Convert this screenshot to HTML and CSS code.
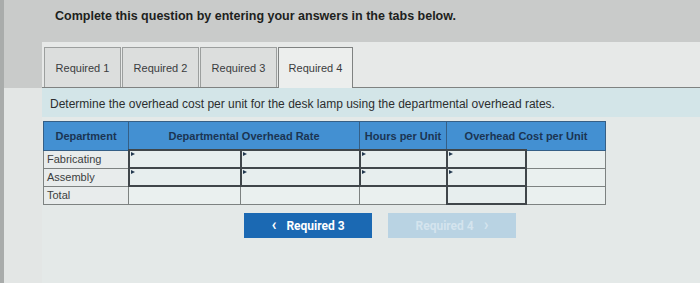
FILE: index.html
```html
<!DOCTYPE html>
<html>
<head>
<meta charset="utf-8">
<link rel="stylesheet" href="styles.css">
</head>
<body>
<div class="page">
  <div class="top">
    <p class="prompt">Complete this question by entering your answers in the tabs below.</p>
    <div class="tabs">
      <div class="tab">Required 1</div>
      <div class="tab">Required 2</div>
      <div class="tab">Required 3</div>
      <div class="tab active">Required 4</div>
    </div>
  </div>
  <div class="content">
    <p class="instr">Determine the overhead cost per unit for the desk lamp using the departmental overhead rates.</p>
    <table class="grid">
      <colgroup>
        <col class="c-dept"><col class="c-r1"><col class="c-r2"><col class="c-hrs"><col class="c-o1"><col class="c-o2">
      </colgroup>
      <thead>
        <tr>
          <th>Department</th>
          <th colspan="2">Departmental Overhead Rate</th>
          <th>Hours per Unit</th>
          <th colspan="2">Overhead Cost per Unit</th>
        </tr>
      </thead>
      <tbody>
        <tr>
          <td class="label">Fabricating</td>
          <td class="in"></td><td class="in"></td><td class="in"></td><td class="in"></td><td></td>
        </tr>
        <tr>
          <td class="label">Assembly</td>
          <td class="in"></td><td class="in"></td><td class="in"></td><td class="in"></td><td></td>
        </tr>
        <tr>
          <td class="label">Total</td>
          <td></td><td></td><td></td><td class="in plain"></td><td></td>
        </tr>
      </tbody>
    </table>
    <div class="nav">
      <button class="btn prev"><span class="chev">&lsaquo;</span>Required 3</button>
      <button class="btn next" disabled>Required 4<span class="chev right">&rsaquo;</span></button>
    </div>
  </div>
</div>
</body>
</html>
```
FILE: styles.css
```css
html, body {
  margin: 0;
  padding: 0;
}
body {
  width: 700px;
  height: 283px;
  overflow: hidden;
  background: #e3e6e5;
  font-family: "Liberation Sans", Arial, sans-serif;
  color: #2a2c2d;
}
.page {
  border-left: 4px solid #a9acab;
  min-height: 283px;
  box-sizing: border-box;
}
.top {
  background: #c9cbca;
}
.prompt {
  margin: 0;
  height: 42px;
  box-sizing: border-box;
  padding: 10px 0 0 51px;
  font-size: 12.5px;
  font-weight: bold;
  color: #1d1f20;
  line-height: 13px;
}
.tabs {
  margin-left: 38px;
  height: 46px;
  box-sizing: border-box;
  background: #e7e9e8;
  border-bottom: 1px solid #7f8281;
  display: flex;
  align-items: flex-end;
  gap: 1px;
  padding-left: 2px;
}
.tab {
  width: 77px;
  height: 40px;
  box-sizing: border-box;
  border: 1px solid #9c9f9e;
  border-bottom: none;
  background: #dcdedd;
  display: flex;
  align-items: center;
  justify-content: center;
  font-size: 11px;
  color: #3a3c3d;
}
.tab.active {
  width: 75px;
  background: #eceeed;
  border-color: #7f8281;
  height: 41px;
  margin-bottom: -1px;
}
.content {
  margin-left: 38px;
  background: #e4e9e8;
  height: 195px;
}
.instr {
  margin: 0;
  height: 29px;
  box-sizing: border-box;
  background: #d3e5e8;
  padding: 9px 0 0 8px;
  font-size: 12px;
  line-height: 14px;
  color: #2c2e2f;
}
.grid {
  margin: 4px 0 0 1px;
  border-collapse: collapse;
  table-layout: fixed;
  width: 563px;
  font-size: 11px;
}
.c-dept { width: 85px; }
.c-r1 { width: 112px; }
.c-r2 { width: 119px; }
.c-hrs { width: 87px; }
.c-o1 { width: 79px; }
.c-o2 { width: 80px; }
.grid th {
  background: #4390d2;
  color: #1b3552;
  font-weight: bold;
  height: 27px;
  border: 1px solid #355f86;
  padding: 0;
  text-align: center;
}
.grid td {
  height: 16px;
  border: 1px solid #7d8281;
  padding: 0 0 0 3px;
  position: relative;
  background: #eaf0ef;
}
.grid td.label {
  color: #3b3e40;
  background: #e8ecec;
}
.grid td.in {
  border: 2px solid #40464a;
  background: #e7eeee;
}
.grid td.in::before {
  content: "";
  position: absolute;
  left: 1px;
  top: 1px;
  border-style: solid;
  border-width: 2px 0 2px 4px;
  border-color: transparent transparent transparent #23384f;
}
.grid td.plain::before {
  display: none;
}
.nav {
  display: flex;
  gap: 16px;
  padding: 8px 0 0 202px;
}
.btn {
  width: 128px;
  height: 25px;
  border: none;
  margin: 0;
  padding: 0;
  font-family: Roboto, "Liberation Sans", sans-serif;
  font-size: 12px;
  font-weight: bold;
  display: flex;
  align-items: center;
  justify-content: center;
  gap: 10px;
}
.btn.prev {
  background: #1b69b3;
  color: #ffffff;
}
.btn.next {
  background: #b9d3e3;
  color: #d4e4ee;
}
.chev {
  font-size: 16px;
  line-height: 14px;
  margin-top: -2px;
}
```
